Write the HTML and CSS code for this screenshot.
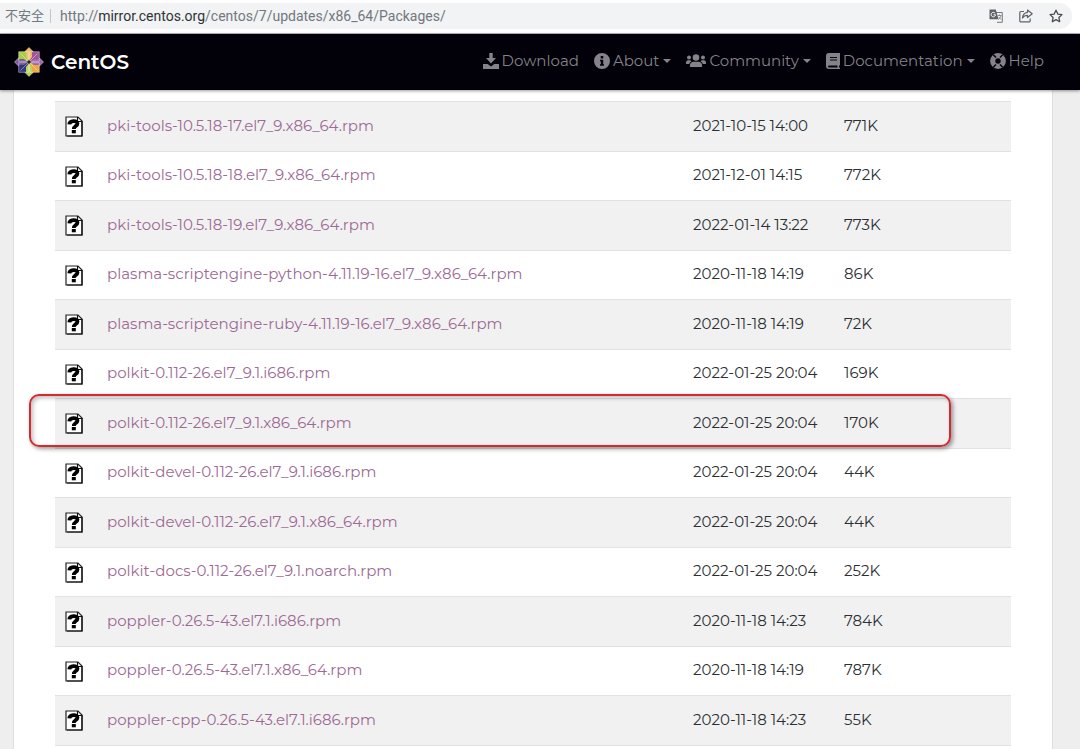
FILE: index.html
```html
<!DOCTYPE html>
<html lang="en">
<head>
  <meta charset="UTF-8" />
  <meta name="viewport" content="width=device-width, initial-scale=1.0" />
  <title>Index of /centos/7/updates/x86_64/Packages</title>
  <link rel="stylesheet" href="styles.css">
</head>
<body>
  <svg class="defs" width="0" height="0" aria-hidden="true">
    <symbol id="unknown" viewBox="0 0 18 21">
      <path d="M1 1h12l4 4v15H1z" fill="#fff" stroke="#222" stroke-width="1.2"/>
      <path d="M12.500 1v4.500H17M17 5v15H2" fill="none" stroke="#111" stroke-width="1.200"/>
      <path d="M4.300 8.300C4.500 4.200 12.500 4 12.500 7.500C12.500 10 8.800 10 8.800 13" fill="none" stroke="#000" stroke-width="3.800"/>
      <path d="M6.800 14h4v3.300h-4z" fill="#000"/>
    </symbol>
  </svg>

  <div class="toolbar">
    <div class="address">
      <span class="insecure">不安全</span>
      <span class="url">http://<b>mirror.centos.org</b>/centos/7/updates/x86_64/Packages/</span>
      <div class="tools">
        <button type="button" aria-label="Translate">
          <svg width="14" height="14" viewBox="0 0 14 14">
            <path d="M6 3.500h7.300v9.800H8" fill="#f1f3f4" stroke="#777"/>
            <path d="M.5.500h6.300l2.700 9.800H.5z" fill="#5f6368"/>
            <path d="M6 4.200A2.200 2.200 0 1 0 6.500 5.800H4.600" fill="none" stroke="#fff"/>
            <path d="M8.500 6.500h4M10.500 5.500v1M12 6.500c-.5 2-1.500 3-2.500 4M9.800 8l2.300 2.500" fill="none" stroke="#777" stroke-width=".8"/>
          </svg>
        </button>
        <button type="button" aria-label="Share">
          <svg width="14" height="14" viewBox="0 0 14 14" fill="none" stroke="#5f6368" stroke-width="1.200" stroke-linejoin="round">
            <path d="M5 2.500H2a1.200 1.200 0 0 0-1.200 1.200v8A1.200 1.200 0 0 0 2 12.900h8a1.200 1.200 0 0 0 1.200-1.200V9.500"/>
            <path d="M8.500 1l4.700 3.700-4.700 3.800V6.300C6 6.300 4.500 7.200 3.500 9c.2-3 2-5.300 5-5.700z"/>
          </svg>
        </button>
        <button type="button" aria-label="Bookmark">
          <svg width="14" height="14" viewBox="0 0 14 14">
            <path d="M7 1.200l1.800 3.900 4.200.5-3.100 2.900.8 4.200L7 10.600l-3.700 2.100.8-4.200L1 5.600l4.200-.5z" fill="none" stroke="#4a4d51" stroke-width="1.300" stroke-linejoin="round"/>
          </svg>
        </button>
      </div>
    </div>
  </div>

  <header>
    <a class="brand" href="#">
      <svg width="30" height="30" viewBox="-15 -15 30 30" aria-hidden="true">
        <path d="M-4.300-10.200L0-14.500l4.300 4.300L0-5.900z" fill="#efb04f"/>
        <path d="M10.200-4.300L14.500 0l-4.300 4.300L5.900 0z" fill="#a66cb5"/>
        <path d="M-4.300 10.200L0 14.500l4.300-4.300L0 5.900z" fill="#a9cf48"/>
        <path d="M-10.200-4.300L-14.500 0l4.300 4.300L-5.900 0z" fill="#8b5fae"/>
        <path d="M-10.300-10.300h9.600v9.600h-9.600z" fill="#a6cf3f"/>
        <path d="M.7-10.300h9.600v9.600H.7z" fill="#a0529a"/>
        <path d="M.7.700h9.600v9.600H.7z" fill="#efa83d"/>
        <path d="M-10.300.7h9.600v9.600h-9.600z" fill="#35357f"/>
        <path d="M0-13L3-9.500V-5L0-1.500-3-5v-4.500z" fill="#eebc62"/>
        <path d="M13 0L9.500 3H5L1.500 0 5-3h4.500z" fill="#9868ae"/>
        <path d="M0 13L3 9.500V5L0 1.500-3 5v4.500z" fill="#b8d35a"/>
        <path d="M-13 0L-9.500 3H-5L-1.500 0-5-3h-4.500z" fill="#78559f"/>
        <path d="M-10.300-10.300H-.7v9.600h-9.600zM.7-10.300h9.600v9.600H.7zM.7.700h9.600v9.600H.7zM-10.300.7h9.600v9.600h-9.600zM-8.500-8.500L8.500 8.500M8.500-8.500L-8.500 8.500M-4.300-10.300L0-14.500l4.300 4.200M10.300-4.300L14.500 0l-4.200 4.300M-4.300 10.300L0 14.500l4.300-4.200M-10.300-4.300L-14.500 0l4.200 4.300" fill="none" stroke="#fff" stroke-opacity=".6" stroke-width=".7"/>
        <path d="M-1.300-1.300h2.600v2.600h-2.600z" fill="#222"/>
      </svg>
      <span>CentOS</span>
    </a>
    <nav>
      <ul>
        <li><a href="#"><svg width="16" height="16" viewBox="0 0 16 16"><path d="M6.300 0h3.400v5H13L8 10.500 3 5h3.300zM0 11h4.700L8 13.500l3.300-2.500H16v5H0z"/></svg>Download</a></li>
        <li><a class="dropdown" href="#"><svg width="16" height="16" viewBox="0 0 16 16"><path fill-rule="evenodd" d="M8 0a8 8 0 1 0 0 16A8 8 0 0 0 8 0zM6.700 3h2.600v2.500H6.700zM6 6.700h3.200v4.500H10v1.600H6v-1.600h.8V8.300H6z"/></svg>About</a></li>
        <li><a class="dropdown" href="#"><svg width="20" height="16" viewBox="0 0 20 16"><circle cx="10" cy="4.500" r="3.300"/><circle cx="3" cy="4.500" r="2"/><circle cx="17" cy="4.500" r="2"/><path d="M4 14v-2c0-2 1.500-3.300 3.500-3.300h5c2 0 3.500 1.300 3.500 3.300v2zM0 10c0-2 .8-2.800 2-2.800h2.200l1.300 1C4 9 3.500 10 3.300 11H0zM20 10c0-2-.8-2.800-2-2.800h-2.200l-1.300 1c1.500.8 2 1.800 2.200 2.800H20z"/></svg>Community</a></li>
        <li><a class="dropdown" href="#"><svg width="14" height="16" viewBox="0 0 14 16"><path fill-rule="evenodd" d="M3 0h11v12.500h-1v2h1V16H3a3 3 0 0 1-3-3V3a3 3 0 0 1 3-3zM4 4v1h7V4zM4 6.500v1h7v-1zM3 12.500a1 1 0 0 0 0 2h8.500v-2z"/></svg>Documentation</a></li>
        <li><a href="#"><svg width="16" height="16" viewBox="0 0 16 16"><circle cx="8" cy="8" r="5.300" fill="none" stroke="currentColor" stroke-width="5.200"/><path d="M3.500 2L6 4.500M12.500 2L10 4.500M3.500 14L6 11.500M12.500 14L10 11.500" stroke="#020008" stroke-width="1.500"/></svg>Help</a></li>
      </ul>
    </nav>
  </header>

  <main>
    <table>
      <colgroup>
        <col class="col-icon">
        <col>
        <col class="col-date">
        <col class="col-size">
      </colgroup>
      <tbody>
        <tr><td><svg class="file"><use href="#unknown"/></svg></td><td><a href="#">pki-tools-10.5.18-17.el7_9.x86_64.rpm</a></td><td>2021-10-15 14:00</td><td>771K</td></tr>
        <tr><td><svg class="file"><use href="#unknown"/></svg></td><td><a href="#">pki-tools-10.5.18-18.el7_9.x86_64.rpm</a></td><td>2021-12-01 14:15</td><td>772K</td></tr>
        <tr><td><svg class="file"><use href="#unknown"/></svg></td><td><a href="#">pki-tools-10.5.18-19.el7_9.x86_64.rpm</a></td><td>2022-01-14 13:22</td><td>773K</td></tr>
        <tr><td><svg class="file"><use href="#unknown"/></svg></td><td><a href="#">plasma-scriptengine-python-4.11.19-16.el7_9.x86_64.rpm</a></td><td>2020-11-18 14:19</td><td>86K</td></tr>
        <tr><td><svg class="file"><use href="#unknown"/></svg></td><td><a href="#">plasma-scriptengine-ruby-4.11.19-16.el7_9.x86_64.rpm</a></td><td>2020-11-18 14:19</td><td>72K</td></tr>
        <tr><td><svg class="file"><use href="#unknown"/></svg></td><td><a href="#">polkit-0.112-26.el7_9.1.i686.rpm</a></td><td>2022-01-25 20:04</td><td>169K</td></tr>
        <tr class="marked"><td><svg class="file"><use href="#unknown"/></svg></td><td><a href="#">polkit-0.112-26.el7_9.1.x86_64.rpm</a></td><td>2022-01-25 20:04</td><td>170K<span class="marker"></span></td></tr>
        <tr><td><svg class="file"><use href="#unknown"/></svg></td><td><a href="#">polkit-devel-0.112-26.el7_9.1.i686.rpm</a></td><td>2022-01-25 20:04</td><td>44K</td></tr>
        <tr><td><svg class="file"><use href="#unknown"/></svg></td><td><a href="#">polkit-devel-0.112-26.el7_9.1.x86_64.rpm</a></td><td>2022-01-25 20:04</td><td>44K</td></tr>
        <tr><td><svg class="file"><use href="#unknown"/></svg></td><td><a href="#">polkit-docs-0.112-26.el7_9.1.noarch.rpm</a></td><td>2022-01-25 20:04</td><td>252K</td></tr>
        <tr><td><svg class="file"><use href="#unknown"/></svg></td><td><a href="#">poppler-0.26.5-43.el7.1.i686.rpm</a></td><td>2020-11-18 14:23</td><td>784K</td></tr>
        <tr><td><svg class="file"><use href="#unknown"/></svg></td><td><a href="#">poppler-0.26.5-43.el7.1.x86_64.rpm</a></td><td>2020-11-18 14:19</td><td>787K</td></tr>
        <tr><td><svg class="file"><use href="#unknown"/></svg></td><td><a href="#">poppler-cpp-0.26.5-43.el7.1.i686.rpm</a></td><td>2020-11-18 14:23</td><td>55K</td></tr>
      </tbody>
    </table>
  </main>
</body>
</html>
```
FILE: styles.css
```css
* {
  box-sizing: border-box;
}

body {
  display: flex;
  flex-direction: column;
  min-height: 100vh;
  font-family: Montserrat, Inter, sans-serif;
  font-size: 15px;
  line-height: 24px;
  margin: 0;
  background-color: #eeeeee;
  color: #2b2f33;
}

a {
  text-decoration: none;
}

.defs {
  position: absolute;
}

/* Browser toolbar */
.toolbar {
  background-color: white;
  border-bottom: 1px solid #b4b6b8;
  padding: 3px 8px 4px 0;
}

.address {
  display: flex;
  align-items: center;
  height: 26px;
  padding: 0 9px 0 5px;
  background-color: #f1f3f4;
  border-radius: 0 13px 13px 0;
  font-family: Roboto, "Noto Sans CJK SC", sans-serif;
  font-size: 13px;
  color: #74777b;
}

.insecure {
  line-height: 14px;
  padding-right: 6px;
  margin-right: 9px;
  border-right: 1px solid #c4c6c9;
}

.url {
  font-size: 14px;
}

.url b {
  font-weight: 400;
  color: #303236;
}

.tools {
  display: flex;
  gap: 16px;
  margin-left: auto;
}

.tools button {
  display: flex;
  padding: 0;
  border: none;
  background: none;
}

/* Navbar */
header {
  position: relative;
  display: flex;
  align-items: center;
  justify-content: space-between;
  height: 56px;
  padding: 0 36px 0 14px;
  background-color: #020008;
  box-shadow: 0 1px 3px rgba(0, 0, 0, 0.4);
}

.brand {
  display: flex;
  align-items: center;
  gap: 7px;
  color: white;
  font-size: 20px;
  font-weight: 600;
}

nav ul {
  display: flex;
  list-style: none;
  gap: 15px;
  margin: 0;
  padding: 0 0 2px;
}

nav a {
  display: flex;
  align-items: center;
  gap: 3px;
  color: #858389;
}

nav svg {
  fill: currentColor;
}

.dropdown::after {
  content: "";
  margin-left: 1px;
  border-top: 4px solid;
  border-left: 4px solid transparent;
  border-right: 4px solid transparent;
}

/* Package list */
main {
  flex: 1;
  margin: 0 27px 0 13px;
  padding: 11px 41px 0;
  background-color: white;
  border: solid #dedede;
  border-width: 0 1px;
}

table {
  width: 100%;
  table-layout: fixed;
  border-collapse: separate;
  border-spacing: 0;
  border-bottom: 1px solid #dee2e6;
}

.col-icon {
  width: 40px;
}

.col-date {
  width: 151px;
}

.col-size {
  width: 179px;
}

tr {
  height: 49px;
}

tr:nth-child(odd) {
  height: 50px;
  background-color: #f1f1f1;
}

td {
  padding: 0 12px 2px;
  border-top: 1px solid #dee2e6;
  white-space: nowrap;
}

td:first-child {
  padding: 0 10px;
}

td a {
  color: #9c6a94;
}

.file {
  display: block;
  width: 18px;
  height: 21px;
}

.marked {
  position: relative;
}

.marker {
  position: absolute;
  top: -4px;
  bottom: 1px;
  left: -26px;
  right: 60px;
  border: 2px solid #d42a2e;
  border-radius: 10px;
  box-shadow: 2px 2px 4px rgba(0, 0, 0, 0.4), inset 2px 2px 4px rgba(0, 0, 0, 0.25);
}
```
